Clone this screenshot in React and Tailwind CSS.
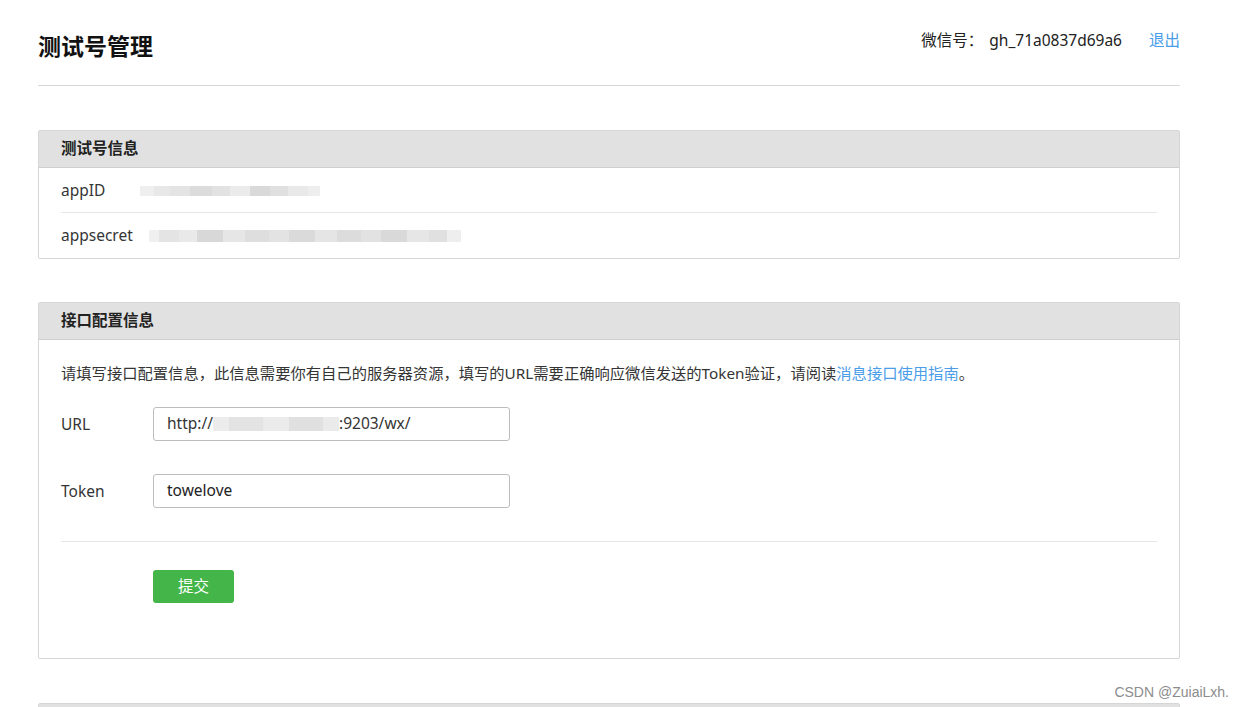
const FONT = { fontFamily: '"Noto Sans", "Noto Sans CJK SC", sans-serif' };

const APPID_MASK = [
  [14, "#efefef"], [16, "#e8e8e8"], [20, "#e4e4e4"], [22, "#dcdcdc"], [18, "#e2e2e2"],
  [20, "#ebebeb"], [20, "#d9d9d9"], [18, "#e0e0e0"], [20, "#e9e9e9"], [12, "#eeeeee"],
];

const SECRET_MASK = [
  [10, "#f0f0f0"], [20, "#e4e4e4"], [18, "#e9e9e9"], [26, "#d8d8d8"], [22, "#e6e6e6"],
  [24, "#dedede"], [20, "#e3e3e3"], [26, "#dadada"], [22, "#e5e5e5"], [24, "#dcdcdc"],
  [20, "#e2e2e2"], [26, "#d9d9d9"], [22, "#e6e6e6"], [18, "#e0e0e0"], [14, "#eeeeee"],
];

const URL_MASK = [
  [16, "#ececec"], [34, "#e3e3e3"], [26, "#ebebeb"], [34, "#e0e0e0"], [16, "#eaeaea"],
];

function Mask({ parts, h = "h-[10px]" }) {
  return (
    <span className={`flex ${h}`}>
      {parts.map(([w, c], i) => (
        <span key={i} className="h-full" style={{ width: w, background: c }} />
      ))}
    </span>
  );
}

function Panel({ title, children }) {
  return (
    <section className="border border-[#d6d6d6] rounded-[2px] bg-white">
      <div className="h-[37px] bg-[#e1e1e1] border-b border-[#cfcfcf] flex items-center px-[22px] text-[15.5px] font-bold text-[#222]">
        {title}
      </div>
      {children}
    </section>
  );
}

export default function App() {
  return (
    <div className="relative min-h-[707px] bg-white text-[#353535] overflow-hidden" style={FONT}>
      <div className="mx-[38px] w-[1142px]">
        <header className="h-[86px] flex justify-between items-start border-b border-[#d8d8d8]">
          <h1 className="mt-[31px] text-[23px] leading-[30px] font-bold text-[#111]">测试号管理</h1>
          <div className="mt-[30px] flex items-center text-[15.5px] leading-[20px] text-[#222]">
            <span>微信号：</span>
            <span className="ml-[6px]">gh_71a0837d69a6</span>
            <a href="#" className="ml-[27px] text-[#4a9de9]">退出</a>
          </div>
        </header>

        <div className="mt-[44px]">
          <Panel title="测试号信息">
            <div className="px-[22px] text-[15.5px]">
              <div className="h-[45px] pt-[2px] flex items-center border-b border-[#e6e6e6]">
                <span className="w-[79px]">appID</span>
                <Mask parts={APPID_MASK} />
              </div>
              <div className="h-[45px] pt-[1px] flex items-center">
                <span className="w-[88px]">appsecret</span>
                <Mask parts={SECRET_MASK} h="h-[12px]" />
              </div>
            </div>
          </Panel>
        </div>

        <div className="mt-[43px]">
          <Panel title="接口配置信息">
            <div className="px-[22px] pt-[22px] pb-[55px] text-[15.5px]">
              <p className="leading-[22px] text-[15.3px]">
                请填写接口配置信息，此信息需要你有自己的服务器资源，填写的URL需要正确响应微信发送的Token验证，请阅读
                <a href="#" className="text-[#4a9de9]">消息接口使用指南</a>。
              </p>
              <div className="mt-[23px] flex items-center">
                <span className="w-[92px] pt-[2px]">URL</span>
                <div className="w-[357px] h-[34px] border border-[#bdbdbd] rounded-[3px] flex items-center px-[13px]">
                  <span>http://</span>
                  <Mask parts={URL_MASK} h="h-[14px]" />
                  <span>:9203/wx/</span>
                </div>
              </div>
              <div className="mt-[33px] flex items-center">
                <span className="w-[92px] pt-[2px]">Token</span>
                <div className="w-[357px] h-[34px] border border-[#bdbdbd] rounded-[3px] flex items-center px-[13px] text-[#222]">
                  towelove
                </div>
              </div>
              <div className="mt-[33px] border-t border-[#e6e6e6]" />
              <div className="mt-[28px] pl-[92px]">
                <button className="w-[81px] h-[33px] rounded-[3px] bg-[#44b549] text-white text-[15.5px]">提交</button>
              </div>
            </div>
          </Panel>
        </div>

        <div className="mt-[44px]">
          <Panel title="" />
        </div>
      </div>

      <div
        className="absolute right-[15px] top-[682px] text-[14px] text-[#8c8c8c]"
        style={{ fontFamily: '"Liberation Sans", Arial, sans-serif' }}
      >
        CSDN @ZuiaiLxh.
      </div>
    </div>
  );
}
